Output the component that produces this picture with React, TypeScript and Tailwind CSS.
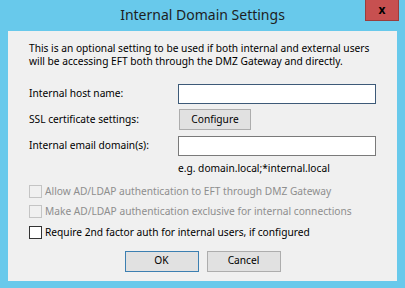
import React, { useState } from 'react';

const font = { fontFamily: '"Noto Sans", "Open Sans", sans-serif' };

const Checkbox: React.FC<{ label: string; disabled?: boolean; checked: boolean; onChange: () => void }> = ({ label, disabled, checked, onChange }) => (
  <label className={`flex items-center h-[20.5px] whitespace-nowrap ${disabled ? 'text-[#8e8e8e]' : 'text-black'}`}>
    <span
      onClick={() => !disabled && onChange()}
      className={`w-[13px] h-[13px] border flex items-center justify-center ${disabled ? 'border-[#c4c4c4] bg-[#f0f0f0]' : 'border-[#333333] bg-white'}`}
    >
      {checked && <span className="text-[10px] leading-none">✓</span>}
    </span>
    <span className="ml-[3px]">{label}</span>
  </label>
);

export default function App() {
  const [host, setHost] = useState('');
  const [email, setEmail] = useState('');
  const [twoFactor, setTwoFactor] = useState(false);

  return (
    <div className="w-[405px] h-[288px] bg-[#68c9eb] flex flex-col overflow-hidden" style={font}>
      {/* title bar */}
      <div className="h-[31px] flex items-start relative">
        <div className="flex-1 text-center text-[14px] text-[#1e1e1e] pt-[5px] leading-[20px]">Internal Domain Settings</div>
        <div className="absolute right-[6px] top-0 w-[34px] h-[21px] bg-[#c75050] border border-t-0 border-[#9a3d3d] flex items-center justify-center text-black font-bold text-[12px] leading-none">
          x
        </div>
      </div>

      {/* client */}
      <div className="mx-[8px] h-[250px] bg-[#f0f0f0] text-[10.2px] text-black pl-[21px] pr-[10px] flex flex-col whitespace-nowrap">
        <p className="mt-[11px] leading-[13px]">
          This is an optional setting to be used if both internal and external users
          <br />
          will be accessing EFT both through the DMZ Gateway and directly.
        </p>

        <div className="flex items-center mt-[16px]">
          <span className="w-[149px]">Internal host name:</span>
          <input
            value={host}
            onChange={e => setHost(e.target.value)}
            className="w-[198px] h-[20px] border border-[#3d5a78] bg-white outline-none px-1"
          />
        </div>

        <div className="flex items-center mt-[5px]">
          <span className="w-[149px]">SSL certificate settings:</span>
          <button className="ml-[1px] w-[72px] h-[21px] bg-[#e1e1e1] border border-[#adadad]">Configure</button>
        </div>

        <div className="flex items-center mt-[6px]">
          <span className="w-[149px]">Internal email domain(s):</span>
          <input
            value={email}
            onChange={e => setEmail(e.target.value)}
            className="w-[198px] h-[20px] border border-[#7a7a7a] bg-white outline-none px-1"
          />
        </div>

        <div className="ml-[149px] mt-[6px] leading-[13px]">e.g. domain.local;*internal.local</div>

        <div className="mt-[6px] flex flex-col">
          <Checkbox label="Allow AD/LDAP authentication to EFT through DMZ Gateway" disabled checked={false} onChange={() => {}} />
          <Checkbox label="Make AD/LDAP authentication exclusive for internal connections" disabled checked={false} onChange={() => {}} />
          <Checkbox label="Require 2nd factor auth for internal users, if configured" checked={twoFactor} onChange={() => setTwoFactor(v => !v)} />
        </div>

        <div className="flex justify-center gap-[8px] mt-[8px] -ml-[21px] -mr-[10px]">
          <button className="w-[74px] h-[21px] bg-[#e1e1e1] border border-[#3c7fb1]">OK</button>
          <button className="w-[74px] h-[21px] bg-[#e1e1e1] border border-[#adadad]">Cancel</button>
        </div>
      </div>
    </div>
  );
}
